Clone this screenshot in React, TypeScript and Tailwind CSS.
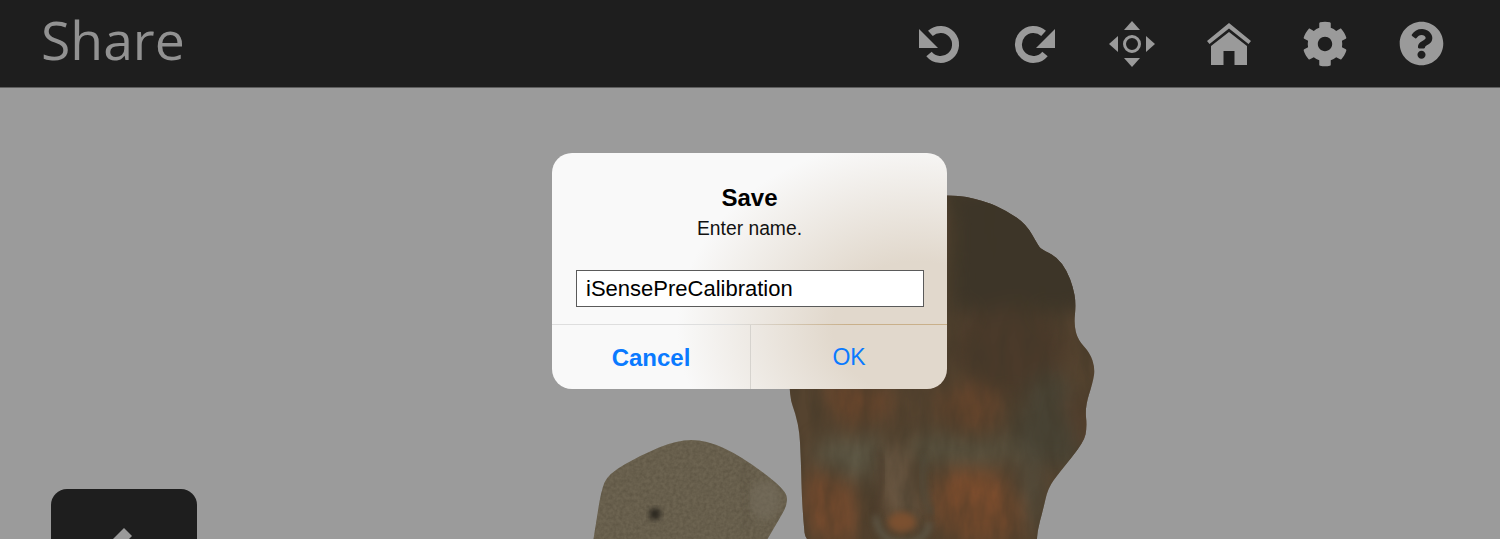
import { FaCog, FaQuestionCircle } from 'react-icons/fa';

// smooth a closed outline through the midpoints of its edges
const smooth = (pts: number[][]) => {
  const mid = (a: number[], b: number[]) => `${(a[0] + b[0]) / 2} ${(a[1] + b[1]) / 2}`;
  let d = `M${mid(pts[pts.length - 1], pts[0])}`;
  pts.forEach((p, i) => {
    d += ` Q${p[0]} ${p[1]} ${mid(p, pts[(i + 1) % pts.length])}`;
  });
  return d + ' Z';
};

const headOutline = [
  [800, 250], [860, 205], [948, 193], [985, 201], [1007, 211], [1026, 224], [1038, 245], [1041, 249], [1057, 257],
  [1067, 271], [1073, 287], [1076, 303], [1074, 325], [1078, 340], [1090, 353], [1095, 368], [1093, 382], [1085, 407],
  [1087, 427], [1084, 442], [1059, 473], [1048, 488], [1043, 510], [1037, 532], [1036, 560], [807, 560], [802, 505],
  [801, 462], [799, 423], [786, 388],
];

const bearOutline = [
  [590, 560], [595, 530], [601, 491], [608, 474], [641, 455], [677, 440], [706, 440], [741, 456], [785, 489], [788, 503],
  [780, 518], [755, 560],
];

const ArrowIcon = ({ mirrored }: { mirrored?: boolean }) => (
  <svg viewBox="0 0 44 42" className={mirrored ? 'w-[44px] h-[42px] -scale-x-100' : 'w-[44px] h-[42px]'}>
    <path d="M13.4 10.4 A15 15 0 1 1 12 31" fill="none" stroke="#9a9a9a" strokeWidth="7" />
    <path d="M2 6 L2 25 L21 25 Z" fill="#9a9a9a" />
  </svg>
);

const MoveIcon = () => (
  <svg viewBox="0 0 46 46" className="w-[46px] h-[46px]" fill="#9a9a9a">
    <path d="M23 0 L31 9 L15 9 Z" />
    <path d="M23 46 L15 37 L31 37 Z" />
    <path d="M0 23 L9 15 L9 31 Z" />
    <path d="M46 23 L37 31 L37 15 Z" />
    <circle cx="23" cy="23" r="7.5" fill="none" stroke="#9a9a9a" strokeWidth="3" />
  </svg>
);

const HomeIcon = () => (
  <svg viewBox="0 0 44 42" className="w-[44px] h-[42px]" fill="#9a9a9a">
    <path d="M22 0 L44 18 L41.5 21 L22 5.5 L2.5 21 L0 18 Z" />
    <path d="M22 9 L40 23 L40 42 L27.5 42 L27.5 28 L16.5 28 L16.5 42 L4 42 L4 23 Z" />
  </svg>
);

const ScanModels = () => (
  <svg viewBox="0 88 1500 451" className="absolute inset-0 w-full h-full">
    <defs>
      <clipPath id="head">
        <path d={smooth(headOutline)} />
      </clipPath>
      <clipPath id="bear">
        <path d={smooth(bearOutline)} />
      </clipPath>
      <filter id="warp" x="-20%" y="-20%" width="140%" height="140%" colorInterpolationFilters="sRGB">
        <feTurbulence type="fractalNoise" baseFrequency="0.03 0.012" numOctaves="3" seed="4" result="n" />
        <feDisplacementMap in="SourceGraphic" in2="n" scale="35" />
        <feGaussianBlur stdDeviation="10" />
      </filter>
      <filter id="softer" x="-30%" y="-30%" width="160%" height="160%" colorInterpolationFilters="sRGB">
        <feGaussianBlur stdDeviation="3" />
      </filter>
      <filter id="mottle" x="0" y="0" width="100%" height="100%" colorInterpolationFilters="sRGB">
        <feTurbulence type="fractalNoise" baseFrequency="0.05 0.018" numOctaves="4" seed="9" />
        <feColorMatrix values="0 0 0 0 0.24  0 0 0 0 0.21  0 0 0 0 0.15  0.8 0 0 0 -0.22" />
      </filter>
      <filter id="weave" x="0" y="0" width="100%" height="100%" colorInterpolationFilters="sRGB">
        <feTurbulence type="fractalNoise" baseFrequency="0.3" numOctaves="2" seed="2" />
        <feColorMatrix values="0 0 0 0 0.27  0 0 0 0 0.24  0 0 0 0 0.18  0.6 0 0 0 -0.16" />
      </filter>
    </defs>

    <g clipPath="url(#bear)">
      <rect x="580" y="430" width="220" height="120" fill="#6d6451" />
      <rect x="580" y="430" width="220" height="120" filter="url(#weave)" />
      <ellipse cx="765" cy="500" rx="16" ry="20" fill="#787060" opacity="0.5" filter="url(#softer)" />
      <path d="M742 465 Q752 490 744 530" stroke="#4c4436" strokeWidth="2" opacity="0.45" fill="none" filter="url(#softer)" />
      <circle cx="655" cy="514" r="5.5" fill="#1d1a15" filter="url(#softer)" />
    </g>

    <g clipPath="url(#head)">
      <rect x="780" y="190" width="330" height="360" fill="#55432f" />
      <g filter="url(#warp)">
        <rect x="945" y="185" width="160" height="130" fill="#3d3528" />
        <ellipse cx="1010" cy="350" rx="60" ry="40" fill="#4b3a2a" />
        <ellipse cx="1045" cy="420" rx="32" ry="50" fill="#4a4536" />
        <ellipse cx="1078" cy="420" rx="10" ry="26" fill="#5c412e" />
        <ellipse cx="970" cy="405" rx="30" ry="24" fill="#6a462c" />
        <ellipse cx="860" cy="402" rx="30" ry="18" fill="#6e472c" />
        <ellipse cx="850" cy="452" rx="34" ry="20" fill="#625d4a" />
        <ellipse cx="965" cy="452" rx="55" ry="16" fill="#5a5441" />
        <ellipse cx="830" cy="510" rx="24" ry="32" fill="#7a4c2e" />
        <ellipse cx="975" cy="508" rx="42" ry="32" fill="#7e4d2d" />
        <ellipse cx="902" cy="485" rx="14" ry="34" fill="#6c5944" />
        <ellipse cx="1030" cy="485" rx="12" ry="44" fill="#504c3d" />
      </g>
      <rect x="780" y="190" width="330" height="360" filter="url(#mottle)" />
      <path d="M875 515 Q880 545 903 542 Q925 545 930 522" stroke="#5e5848" strokeWidth="5" fill="none" filter="url(#softer)" />
      <ellipse cx="902" cy="522" rx="14" ry="10" fill="#7b5030" filter="url(#softer)" />
      <path d="M878 450 Q888 480 872 515" stroke="#4a3a2a" strokeWidth="5" opacity="0.7" fill="none" filter="url(#softer)" />
      <path d="M925 455 Q918 490 932 515" stroke="#4e4a3b" strokeWidth="6" opacity="0.7" fill="none" filter="url(#softer)" />
    </g>
  </svg>
);

export default function App() {
  const icons = [
    <ArrowIcon key="undo" />,
    <ArrowIcon key="redo" mirrored />,
    <MoveIcon key="move" />,
    <HomeIcon key="home" />,
    <FaCog key="settings" className="w-[46px] h-[46px]" />,
    <FaQuestionCircle key="help" className="w-[45px] h-[45px]" />,
  ];

  return (
    <div className="w-[1500px] h-[539px] flex flex-col overflow-hidden font-['Liberation_Sans',sans-serif]">
      {/* Top bar */}
      <header className="h-[88px] shrink-0 flex items-center justify-between pl-[41px] pr-[30px] bg-[#1e1e1e] border-b border-[#5f5f5f]">
        <h1 className="font-['Open_Sans',sans-serif] font-normal text-[53.5px] leading-none text-[#929292] pb-[8px]">
          Share
        </h1>
        <div className="flex items-center text-[#9a9a9a]">
          {icons.map((icon) => (
            <div key={icon.key} className="w-[96.6px] flex justify-center">
              {icon}
            </div>
          ))}
        </div>
      </header>

      {/* 3D view */}
      <main className="relative flex-1 flex justify-center items-start pt-[65px] bg-[#9b9b9b]">
        <ScanModels />

        <div className="absolute left-[51px] top-[401px] w-[146px] h-[146px] rounded-[16px] bg-[#1e1e1e] flex justify-center">
          <svg viewBox="0 0 60 60" className="w-[60px] h-[60px] mt-[39px]" fill="#9a9a9a">
            <path d="M30 0 L38 8 L12 34 L4 26 Z" />
          </svg>
        </div>

        {/* Save dialog */}
        <div className="relative w-[395px] h-[236px] mr-px flex flex-col rounded-[20px] overflow-hidden bg-[radial-gradient(ellipse_240px_190px_at_365px_175px,#e1d8cc_0%,#e1d8cc_35%,#f9f9f9_100%)]">
          <div className="flex-1 flex flex-col items-center pt-[30px] px-[24px] text-black">
            <div className="font-bold text-[24px] leading-[30px]">Save</div>
            <div className="text-[19.3px] leading-[22px] mt-[5px] text-[#111]">Enter name.</div>
            <input
              readOnly
              value="iSensePreCalibration"
              className="mt-[30px] self-start w-[348px] shrink-0 h-[37px] px-[9px] bg-white border border-[#5a5a5a] text-[22px] text-black outline-none"
            />
          </div>
          <div className="h-px bg-[linear-gradient(90deg,#dedede_45%,#c9b08a_75%)]" />
          <div className="h-[64px] grid grid-cols-[199px_1fr] text-[#0a7aff]">
            <button className="font-bold text-[24px] pt-px border-r border-[#d6d3ce]">Cancel</button>
            <button className="text-[23px] pt-px">OK</button>
          </div>
        </div>
      </main>
    </div>
  );
}
